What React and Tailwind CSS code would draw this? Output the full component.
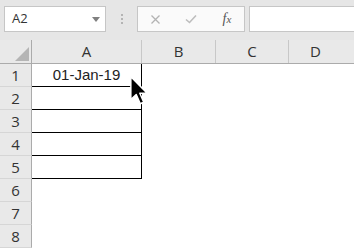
import React from 'react';

const cols = [
  { label: 'A', w: 'w-[110px]' },
  { label: 'B', w: 'w-[74px]' },
  { label: 'C', w: 'w-[73px]' },
];

function RowHead({ n }) {
  return (
    <div className="w-[32px] h-full shrink-0 bg-[#e9e9e9] border-r border-b border-r-[#ababab] border-b-[#d6d6d6] flex items-center justify-center text-[15px] text-[#333]">
      {n}
    </div>
  );
}

function Cursor() {
  return (
    <svg className="absolute left-[129px] top-[75px]" width="20" height="31" viewBox="0 0 12 19">
      <path d="M1 1 L1 15 L4.3 12 L6.8 17.6 L8.9 16.7 L6.5 11.2 L11 11.2 Z" fill="#000" stroke="#fff" strokeWidth="0.9" strokeLinejoin="round" />
    </svg>
  );
}

export default function App() {
  const rows = [1, 2, 3, 4, 5, 6, 7, 8];

  return (
    <div className="relative w-[354px] h-[250px] overflow-hidden bg-white font-['Open_Sans',sans-serif]">
      {/* formula bar */}
      <div className="h-[40px] bg-[#e6e6e6] flex items-start pt-[6px] pl-[4px]">
        <div className="w-[102px] h-[26px] bg-white border border-[#c6c6c6] flex items-center justify-between pl-[7px] pr-[5px]">
          <span className="text-[13px] text-[#333]">A2</span>
          <span className="w-0 h-0 border-l-[4px] border-r-[4px] border-t-[5px] border-l-transparent border-r-transparent border-t-[#808080]" />
        </div>
        <div className="w-[31px] h-[26px] flex flex-col items-center justify-center gap-[2px]">
          <span className="w-[2px] h-[2px] bg-[#b4b4b4]" />
          <span className="w-[2px] h-[2px] bg-[#b4b4b4]" />
          <span className="w-[2px] h-[2px] bg-[#b4b4b4]" />
        </div>
        <div className="w-[108px] h-[26px] bg-[#fafafa] border border-[#c6c6c6] flex items-center">
          <div className="w-[34px] flex justify-center">
            <svg width="11" height="11" viewBox="0 0 11 11">
              <path d="M1.5 1.5 L9.5 9.5 M9.5 1.5 L1.5 9.5" stroke="#b3b3b3" strokeWidth="1.3" />
            </svg>
          </div>
          <div className="w-[38px] flex justify-center">
            <svg width="12" height="10" viewBox="0 0 12 10">
              <path d="M1 5.5 L4.5 8.5 L11 1.5" stroke="#bdbdbd" strokeWidth="1.6" fill="none" />
            </svg>
          </div>
          <div className="flex-1 flex justify-center">
            <span className="font-['Liberation_Serif',serif] italic text-[14px] text-[#555] leading-none">
              f<span className="text-[11px]">x</span>
            </span>
          </div>
        </div>
        <div className="ml-[4px] flex-1 h-[26px] bg-white border border-r-0 border-[#c6c6c6]" />
      </div>

      {/* column headers */}
      <div className="h-[24px] flex bg-[#e9e9e9] border-b border-[#ababab]">
        <div className="w-[32px] shrink-0 border-r border-[#ababab] relative">
          <svg className="absolute right-[2px] bottom-[2px]" width="14" height="14" viewBox="0 0 14 14">
            <path d="M14 0 L14 14 L0 14 Z" fill="#b5b5b5" />
          </svg>
        </div>
        {cols.map((c) => (
          <div
            key={c.label}
            className={`${c.w} shrink-0 border-r border-[#c8c8c8] flex items-center justify-center text-[15px] text-[#333]`}
          >
            {c.label}
          </div>
        ))}
        <div className="flex-1 flex items-center justify-center text-[15px] text-[#333] pr-[12px]">D</div>
      </div>

      {/* rows */}
      {rows.map((n) => (
        <div key={n} className="h-[23px] flex">
          <RowHead n={n} />
          {n <= 5 ? (
            <div className="w-[110px] shrink-0 border-r border-b border-black flex items-center justify-center text-[15px] text-[#222] font-['Liberation_Sans',sans-serif]">
              {n === 1 ? '01-Jan-19' : ''}
            </div>
          ) : (
            <div className="w-[110px] shrink-0" />
          )}
          <div className="flex-1" />
        </div>
      ))}

      <Cursor />
    </div>
  );
}
